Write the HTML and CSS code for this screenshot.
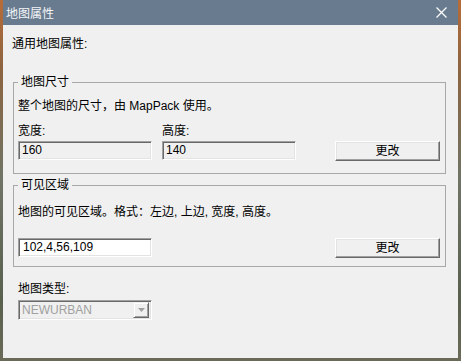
FILE: index.html
```html
<!DOCTYPE html>
<html lang="zh-CN">
<head>
<meta charset="utf-8">
<title>地图属性</title>
<link rel="stylesheet" href="styles.css">
</head>
<body>
<div class="window">
  <div class="titlebar">
    <span class="title">地图属性</span>
    <svg class="close" width="11" height="11" viewBox="0 0 11 11"><path d="M0.5 0.5 L10.5 10.5 M10.5 0.5 L0.5 10.5" stroke="#ffffff" stroke-width="1.2" fill="none"/></svg>
  </div>
  <div class="client">
    <div class="heading">通用地图属性:</div>
    <fieldset class="group g1">
      <legend>地图尺寸</legend>
      <div class="desc d1">整个地图的尺寸，由 MapPack 使用。</div>
      <div class="row">
        <div class="field">
          <div class="label">宽度:</div>
          <div class="input disabled">160</div>
        </div>
        <div class="field">
          <div class="label">高度:</div>
          <div class="input disabled">140</div>
        </div>
        <div class="btn">更改</div>
      </div>
    </fieldset>
    <fieldset class="group g2">
      <legend>可见区域</legend>
      <div class="desc d2">地图的可见区域。格式：左边, 上边, 宽度, 高度。</div>
      <div class="row row2">
        <div class="field">
          <div class="input">102,4,56,109</div>
        </div>
        <div class="btn">更改</div>
      </div>
    </fieldset>
    <div class="typelabel">地图类型:</div>
    <div class="combo">
      <span class="combotext">NEWURBAN</span>
      <span class="dropbtn"><svg width="7" height="4" viewBox="0 0 7 4"><path d="M0 0 H7 L3.5 4 Z" fill="#a0a0a0"/></svg></span>
    </div>
  </div>
</div>
</body>
</html>
```
FILE: styles.css
```css
html, body {
  margin: 0;
  padding: 0;
}
body {
  width: 461px;
  height: 361px;
  overflow: hidden;
  padding: 0 3px 3px 3px;
  box-sizing: border-box;
  background: linear-gradient(to bottom, #b86c38 0px, #8c6440 70px, #6f7466 180px, #59604e 300px, #6b6a58 361px);
  font-family: "Liberation Sans", "Noto Sans CJK SC", sans-serif;
  font-size: 12px;
  color: #000;
}
.window {
  width: 455px;
  height: 358px;
  background: #f0f0f0;
  display: flex;
  flex-direction: column;
}
.titlebar {
  height: 25px;
  background: #687b8f;
  display: flex;
  align-items: center;
  padding: 0 11px 0 3px;
}
.title {
  color: #f4f6f8;
  font-family: "Noto Sans CJK SC", sans-serif;
  font-size: 12px;
  line-height: 16px;
  flex: 1;
}
.close {
  display: block;
  margin-top: -1px;
}
.client {
  display: flex;
  flex-direction: column;
  padding-top: 11px;
}
.heading {
  line-height: 16px;
  padding-left: 9px;
}
.group {
  margin: 0 12px 0 10px;
  padding: 0 5px 0 4px;
  border: 1px solid #a8a8a8;
  min-width: 0;
}
.group legend {
  padding: 0 3px;
  margin: 0;
  line-height: 14px;
  font-size: 12px;
}
.g1 {
  margin-top: 23px;
  padding-bottom: 13px;
}
.g2 {
  margin-top: 4px;
  padding-bottom: 9px;
}
.desc {
  line-height: 16px;
}
.d1 {
  padding-top: 9px;
}
.d2 {
  padding-top: 12px;
}
.row {
  display: flex;
  align-items: flex-end;
  gap: 10px;
  margin-top: 9px;
}
.row2 {
  margin-top: 18px;
}
.field {
  width: 134px;
  display: flex;
  flex-direction: column;
  gap: 2px;
}
.label {
  line-height: 16px;
}
.input {
  height: 19px;
  box-sizing: border-box;
  background: #ffffff;
  border: 1px solid;
  border-color: #a0a0a0 #ffffff #ffffff #a0a0a0;
  box-shadow: inset 1px 1px 0 #696969, inset -1px -1px 0 #e3e3e3;
  line-height: 17px;
  padding-left: 4px;
  white-space: nowrap;
}
.input.disabled {
  background: #f0f0f0;
  padding-left: 3px;
}
.btn {
  margin-left: auto;
  width: 105px;
  height: 20px;
  box-sizing: border-box;
  border: 1px solid;
  border-color: #ffffff #696969 #696969 #ffffff;
  box-shadow: inset -1px -1px 0 #a0a0a0, inset 1px 1px 0 #e3e3e3;
  background: #f0f0f0;
  display: flex;
  align-items: center;
  justify-content: center;
  line-height: 16px;
  margin-bottom: -1px;
}
.typelabel {
  margin-top: 14px;
  padding-left: 15px;
  line-height: 16px;
  color: #000000;
}
.combo {
  margin: 3px 0 0 15px;
  width: 134px;
  height: 20px;
  box-sizing: border-box;
  border: 1px solid;
  border-color: #a0a0a0 #ffffff #ffffff #a0a0a0;
  box-shadow: inset 1px 1px 0 #696969, inset -1px -1px 0 #e3e3e3;
  background: #f0f0f0;
  display: flex;
  align-items: center;
  padding: 0 2px 0 3px;
}
.combotext {
  flex: 1;
  color: #a0a0a0;
  line-height: 16px;
}
.dropbtn {
  width: 16px;
  height: 16px;
  box-sizing: border-box;
  border: 1px solid;
  border-color: #f0f0f0 #696969 #696969 #f0f0f0;
  box-shadow: inset 1px 1px 0 #ffffff, inset -1px -1px 0 #a0a0a0;
  background: #f0f0f0;
  display: flex;
  align-items: center;
  justify-content: center;
}
.dropbtn svg {
  display: block;
}
```
